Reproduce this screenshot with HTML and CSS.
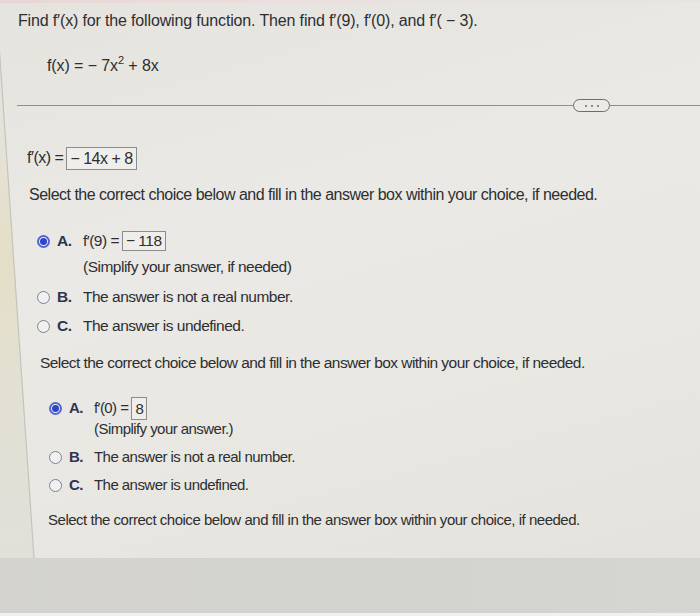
FILE: index.html
```html
<!DOCTYPE html>
<html>
<head>
<meta charset="utf-8">
<link rel="stylesheet" href="styles.css">
</head>
<body>
<div class="page">
  <div class="topline"></div>
  <div class="head">
    <p class="title">Find f′(x) for the following function. Then find f′(9), f′(0), and f′( − 3).</p>
    <p class="func">f(x) = − 7x<sup>2</sup> + 8x</p>
  </div>
  <div class="divider">
    <div class="rule"></div>
    <div class="more"><span></span><span></span><span></span></div>
    <div class="rule end"></div>
  </div>
  <div class="sec s1">
    <p class="deriv">f′(x) = <span class="box dbox">− 14x + 8</span></p>
    <p class="prompt">Select the correct choice below and fill in the answer box within your choice, if needed.</p>
    <div class="choices">
      <div class="choice"><span class="rcell"><span class="radio on"></span></span><b>A.</b><div class="ctext"><div class="ans">f′(9) = <span class="box">− 118</span></div><div class="hint">(Simplify your answer, if needed)</div></div></div>
      <div class="choice"><span class="rcell"><span class="radio"></span></span><b>B.</b><div class="ctext">The answer is not a real number.</div></div>
      <div class="choice"><span class="rcell"><span class="radio"></span></span><b>C.</b><div class="ctext">The answer is undefined.</div></div>
    </div>
  </div>
  <div class="sec s2">
    <p class="prompt">Select the correct choice below and fill in the answer box within your choice, if needed.</p>
    <div class="choices">
      <div class="choice"><span class="rcell"><span class="radio on"></span></span><b>A.</b><div class="ctext"><div class="ans">f′(0) = <span class="box">8</span></div><div class="hint">(Simplify your answer.)</div></div></div>
      <div class="choice"><span class="rcell"><span class="radio"></span></span><b>B.</b><div class="ctext">The answer is not a real number.</div></div>
      <div class="choice"><span class="rcell"><span class="radio"></span></span><b>C.</b><div class="ctext">The answer is undefined.</div></div>
    </div>
  </div>
  <div class="sec s3">
    <p class="prompt">Select the correct choice below and fill in the answer box within your choice, if needed.</p>
  </div>
  <div class="bottom"></div>
  <svg class="edge" width="700" height="616" viewBox="0 0 700 616">
    <defs>
      <linearGradient id="lg" x1="0" y1="0" x2="0" y2="1">
        <stop offset="0" stop-color="#e2e0da" stop-opacity="0"/>
        <stop offset="0.45" stop-color="#e3ddc2" stop-opacity="0.9"/>
        <stop offset="0.7" stop-color="#e0ddcc" stop-opacity="0.7"/>
        <stop offset="1" stop-color="#dcdbd4" stop-opacity="0.6"/>
      </linearGradient>
    </defs>
    <polygon points="0,0 -4,0 34,558 0,558" fill="url(#lg)"/>
    <line x1="-4" y1="0" x2="34" y2="558" stroke="#c4c3bd" stroke-width="1.2"/>
  </svg>
</div>
</body>
</html>
```
FILE: styles.css
```css
* { box-sizing: border-box; }
html, body { margin: 0; padding: 0; }
body {
  width: 700px; height: 616px; overflow: hidden;
  background: #e6e5e0;
  font-family: "Liberation Sans", Arial, sans-serif;
  color: #2e2e30;
}
.page {
  position: relative;
  height: 616px;
  display: flex; flex-direction: column;
  background: linear-gradient(165deg, #e4e3de 0%, #eae9e5 35%, #e8e7e2 65%, #e2e1dc 100%);
}
.edge { position: absolute; left: 0; top: 0; pointer-events: none; }
.topline { height: 3px; background: linear-gradient(90deg, #e8d6d6, #ecdede 40%, #e6e4e0 70%); }
p { margin: 0; }
.head { padding: 8px 0 0 18px; font-size: 16px; }
.title { line-height: 20px; letter-spacing: -0.15px; }
.func { margin: 25px 0 0 29px; line-height: 20px; letter-spacing: -0.1px; }
.func sup { font-size: 11px; line-height: 0; position: relative; top: -1px; }
.divider { display: flex; align-items: center; margin: 23px 0 0 17px; height: 13px; }
.rule { flex: 1; height: 1px; background: #8f8f8d; }
.rule.end { flex: 0 0 90px; }
.more {
  flex: 0 0 37px; height: 13px; border: 1.5px solid #6c6c6c; border-radius: 7px;
  display: flex; justify-content: center; align-items: center; gap: 4px;
  background: #ebeae6;
}
.more span { width: 2px; height: 2px; background: #6a6a6a; border-radius: 1px; }
.sec { font-size: 16px; }
.box {
  display: inline-block; border: 1px solid #8c8c8a; background: #efeeea;
}
.s1 { padding: 34px 0 0 27px; }
.deriv { height: 24px; display: flex; align-items: center; gap: 3px; letter-spacing: -0.5px; }
.dbox { line-height: 21px; padding: 0 3px; }
.prompt { line-height: 20px; }
.s1 .prompt { margin: 15px 0 0 2px; letter-spacing: -0.5px; }
.choices { display: flex; flex-direction: column; }
.choice { display: grid; grid-template-columns: 20px 26px 1fr; align-items: start; }
.rcell { height: 20px; display: flex; align-items: center; }
.choice b { line-height: 20px; font-weight: bold; color: #2f3352; }
.ctext { line-height: 20px; }
.ans { height: 20px; display: flex; align-items: center; gap: 3px; }
.ans .box { line-height: 18px; padding: 0 3px; }
.radio {
  width: 13px; height: 13px; border-radius: 50%; border: 1.5px solid #7d8194;
  display: flex; align-items: center; justify-content: center; background: #f1f1f0;
}
.radio.on { border: 2px solid #5366cf; background: #e9ecf8; }
.radio.on::after { content: ""; width: 7px; height: 7px; border-radius: 50%; background: #2e45c6; }
.s1 .choices { margin: 26px 0 0 10px; gap: 10px; font-size: 15.5px; letter-spacing: -0.5px; }
.s1 .choice:nth-child(3) { margin-top: -1px; }
.s1 .hint { margin-top: 6px; }
.s2 { padding: 17px 0 0 40px; }
.s2 .prompt { font-size: 15.5px; letter-spacing: -0.55px; }
.s2 .choices { margin: 25px 0 0 9px; gap: 8px; font-size: 15px; letter-spacing: -0.55px; }
.s2 .choice { grid-template-columns: 20px 25px 1fr; }
.s2 .ans .box { line-height: 21px; padding: 0 3px; }
.s2 .hint { margin-top: 1px; }
.s3 { padding: 15px 0 0 48px; }
.s3 .prompt { font-size: 15px; letter-spacing: -0.48px; }
.bottom { margin-top: auto; height: 58px; background: linear-gradient(90deg, #d4d3cf, #d2d2ce 50%, #d5d5d1); border-bottom: 3px solid #f0f0ee; }
```
